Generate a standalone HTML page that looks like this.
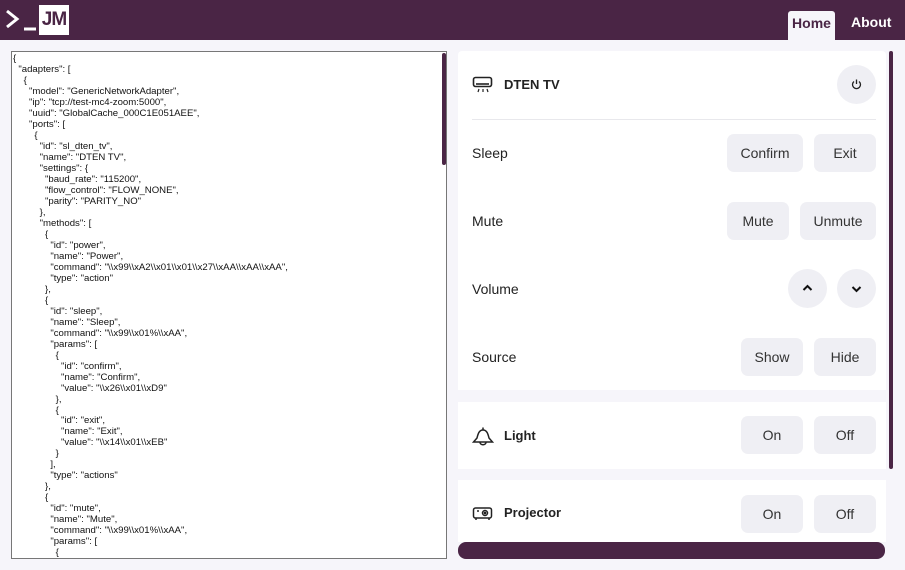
<!DOCTYPE html>
<html><head><meta charset="utf-8"><style>
*{box-sizing:border-box;margin:0;padding:0}
body{width:905px;height:570px;background:#f6f5fa;font-family:"Liberation Sans",sans-serif;position:relative;overflow:hidden;color:#222}
.hdr{position:absolute;left:0;top:0;width:905px;height:40px;background:#4a2545}
.jm{position:absolute;left:39px;top:5px;width:30px;height:30px;background:#fff;color:#4a2545;font:bold 19px "Liberation Sans",sans-serif;text-align:center;line-height:30px;letter-spacing:-1px}
.home{position:absolute;left:788px;top:11px;width:47px;height:29px;background:#f6f5fa;border-radius:3px 3px 0 0;font:bold 14px "Liberation Sans",sans-serif;color:#4a2545;text-align:center;line-height:25px}
.about{position:absolute;left:851px;top:14px;font:bold 14px "Liberation Sans",sans-serif;color:#fff}
.ta{position:absolute;left:11px;top:51px;width:436px;height:508px;background:#fff;border:1px solid #777;overflow:hidden}
.ta pre{font:9.6px/10.98px "Liberation Sans",sans-serif;color:#111;padding:1px 0 0 1px;white-space:pre}
.sb{position:absolute;left:430px;top:1px;width:4px;height:112px;background:#4a2545;border-radius:2px}
.card{position:absolute;left:458px;width:428px;background:#fff}
.btn{position:absolute;height:38px;background:#efeff4;border-radius:7px;font-size:14px;color:#333;text-align:center;line-height:38px}
.circ{position:absolute;width:39px;height:39px;border-radius:50%;background:#efeff4}
.lbl{position:absolute;left:14px;font-size:14px;color:#222}
.tt{position:absolute;left:46px;font-weight:bold;font-size:13px;color:#222}
</style></head><body>
<div class="hdr">
 <svg style="position:absolute;left:5px;top:8px" width="32" height="24" viewBox="0 0 32 24" fill="none" stroke="#fff" stroke-width="3"><path d="M2 3l10 8-10 8"/><line x1="19" y1="21" x2="31" y2="21"/></svg>
 <div class="jm">JM</div><div class="home">Home</div><div class="about">About</div></div>
<div class="ta"><pre>{
  "adapters": [
    {
      "model": "GenericNetworkAdapter",
      "ip": "tcp://test-mc4-zoom:5000",
      "uuid": "GlobalCache_000C1E051AEE",
      "ports": [
        {
          "id": "sl_dten_tv",
          "name": "DTEN TV",
          "settings": {
            "baud_rate": "115200",
            "flow_control": "FLOW_NONE",
            "parity": "PARITY_NO"
          },
          "methods": [
            {
              "id": "power",
              "name": "Power",
              "command": "\\x99\\xA2\\x01\\x01\\x27\\xAA\\xAA\\xAA",
              "type": "action"
            },
            {
              "id": "sleep",
              "name": "Sleep",
              "command": "\\x99\\x01%\\xAA",
              "params": [
                {
                  "id": "confirm",
                  "name": "Confirm",
                  "value": "\\x26\\x01\\xD9"
                },
                {
                  "id": "exit",
                  "name": "Exit",
                  "value": "\\x14\\x01\\xEB"
                }
              ],
              "type": "actions"
            },
            {
              "id": "mute",
              "name": "Mute",
              "command": "\\x99\\x01%\\xAA",
              "params": [
                {</pre><div class="sb"></div></div>

<div style="position:absolute;left:889px;top:51px;width:4px;height:418px;background:#4a2545;border-radius:2px"></div>

<div class="card" style="top:51px;height:339px;border-radius:4px 4px 0 0">
 <svg style="position:absolute;left:14px;top:25px" width="22" height="18" viewBox="0 0 22 18" fill="none" stroke="#222" stroke-width="1.6"><rect x="1.5" y="1.5" width="18" height="9" rx="2"/><line x1="4" y1="8" x2="17" y2="8"/><path d="M7 13l-1 3M11 13v3M15 13l1 3" stroke-width="1.2"/></svg>
 <div class="tt" style="top:26px">DTEN TV</div>
 <div class="circ" style="left:379px;top:14px"><svg style="position:absolute;left:13px;top:13px" width="13" height="13" viewBox="0 0 13 13" fill="none" stroke="#222" stroke-width="1.3"><path d="M4 3.5A4 4 0 1 0 9 3.5"/><line x1="6.5" y1="1.5" x2="6.5" y2="6"/></svg></div>
 <div style="position:absolute;left:14px;top:68px;width:404px;height:1px;background:#e8e8ec"></div>
 <div class="lbl" style="top:94px">Sleep</div>
 <div class="btn" style="left:269px;top:83px;width:76px">Confirm</div>
 <div class="btn" style="left:356px;top:83px;width:62px">Exit</div>
 <div class="lbl" style="top:162px">Mute</div>
 <div class="btn" style="left:269px;top:151px;width:62px">Mute</div>
 <div class="btn" style="left:342px;top:151px;width:76px">Unmute</div>
 <div class="lbl" style="top:230px">Volume</div>
 <div class="circ" style="left:330px;top:218px"><svg style="position:absolute;left:14px;top:15px" width="11" height="8" viewBox="0 0 11 8" fill="none" stroke="#111" stroke-width="2"><path d="M1.5 6L5.5 2l4 4"/></svg></div>
 <div class="circ" style="left:379px;top:218px"><svg style="position:absolute;left:14px;top:16px" width="11" height="8" viewBox="0 0 11 8" fill="none" stroke="#111" stroke-width="2"><path d="M1.5 2L5.5 6l4-4"/></svg></div>
 <div class="lbl" style="top:298px">Source</div>
 <div class="btn" style="left:283px;top:287px;width:62px">Show</div>
 <div class="btn" style="left:356px;top:287px;width:62px">Hide</div>
</div>

<div class="card" style="top:402px;height:67px">
 <svg style="position:absolute;left:14px;top:24px" width="22" height="20" viewBox="0 0 22 20" fill="none" stroke="#222" stroke-width="1.5"><path d="M11 1.5V4M11 4C7 4 6 8 5 12L1.5 16H20.5L17 12C16 8 15 4 11 4Z"/><path d="M8 16.5a3 2.2 0 0 0 6 0"/></svg>
 <div class="tt" style="top:26px">Light</div>
 <div class="btn" style="left:283px;top:14px;width:62px">On</div>
 <div class="btn" style="left:356px;top:14px;width:62px">Off</div>
</div>

<div class="card" style="top:480px;height:62px">
 <svg style="position:absolute;left:14px;top:26px" width="22" height="16" viewBox="0 0 22 16" fill="none" stroke="#222" stroke-width="1.5"><rect x="1.5" y="2" width="18" height="10" rx="2"/><circle cx="13" cy="7" r="2.5"/><circle cx="13" cy="7" r="0.6" fill="#222"/><line x1="5" y1="5" x2="7" y2="5"/><path d="M4 12v2M17 12v2"/></svg>
 <div class="tt" style="top:25px">Projector</div>
 <div class="btn" style="left:283px;top:15px;width:62px">On</div>
 <div class="btn" style="left:356px;top:15px;width:62px">Off</div>
</div>
<div style="position:absolute;left:458px;top:542px;width:427px;height:17px;background:#4a2545;border-radius:8px"></div>
</body></html>
